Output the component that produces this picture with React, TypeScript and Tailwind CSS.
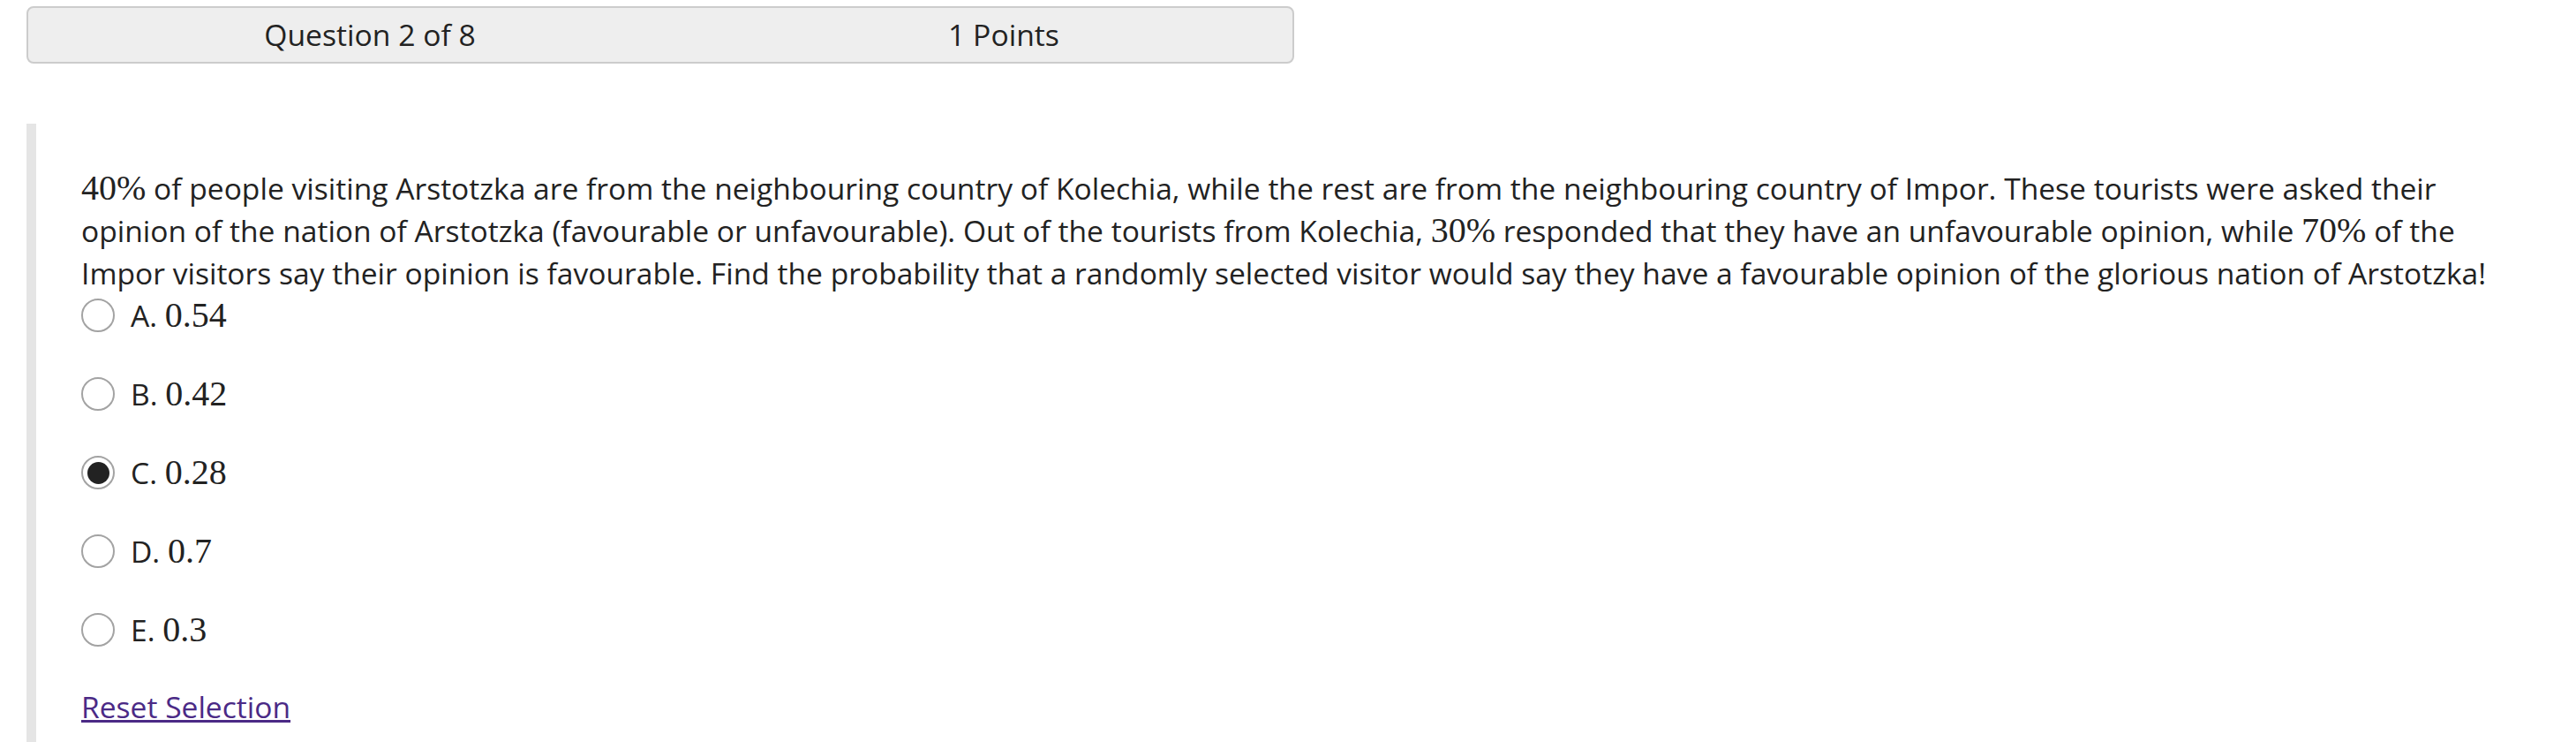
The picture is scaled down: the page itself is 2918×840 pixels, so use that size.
import React from "react";

const options = [
  { letter: "A.", value: "0.54", selected: false },
  { letter: "B.", value: "0.42", selected: false },
  { letter: "C.", value: "0.28", selected: true },
  { letter: "D.", value: "0.7", selected: false },
  { letter: "E.", value: "0.3", selected: false },
];

function M({ children }: { children: React.ReactNode }) {
  return (
    <span className="font-['Liberation_Serif','Times_New_Roman',serif] text-[40px] leading-none">
      {children}
    </span>
  );
}

export default function App() {
  return (
    <div className="w-[2918px] h-[840px] overflow-hidden bg-white text-[#222222] font-['Open_Sans',sans-serif]">
      <div className="pt-[7px] pl-[30px]">
        <div className="w-[1436px] h-[65px] grid grid-cols-[774px_662px] items-center bg-[#eeeeee] border-2 border-[#cccccc] rounded-[8px] text-[33.7px]">
          <div className="text-center">Question 2 of 8</div>
          <div className="text-center">1 Points</div>
        </div>
      </div>

      <div className="mt-[68px] ml-[30px] h-[700px] border-l-[11px] border-[#e5e5e5] pl-[51px] pt-[49px]">
        <p className="w-[2742px] text-[33.6px] leading-[48px]">
          <M>40%</M> of people visiting Arstotzka are from the neighbouring country of Kolechia, while the rest are from the
          neighbouring country of Impor. These tourists were asked their opinion of the nation of Arstotzka (favourable or
          unfavourable). Out of the tourists from Kolechia, <M>30%</M> responded that they have an unfavourable opinion,
          while <M>70%</M> of the Impor visitors say their opinion is favourable. Find the probability that a randomly
          selected visitor would say they have a favourable opinion of the glorious nation of Arstotzka!
        </p>

        <div className="flex flex-col gap-[41px]">
          {options.map((o) => (
            <div key={o.letter} className="flex h-[48px] items-center gap-[18px]">
              <span className="flex h-[38px] w-[38px] items-center justify-center rounded-full border-2 border-[#a3a3a3] bg-white">
                {o.selected && <span className="block h-[25px] w-[25px] rounded-full bg-[#222222]" />}
              </span>
              <span className="text-[33.6px] leading-[48px]">
                {o.letter} <M>{o.value}</M>
              </span>
            </div>
          ))}
        </div>

        <div className="mt-[39px] text-[33.6px] leading-[48px]">
          <a href="#" className="text-[#4b2a86] underline">
            Reset Selection
          </a>
        </div>
      </div>
    </div>
  );
}
